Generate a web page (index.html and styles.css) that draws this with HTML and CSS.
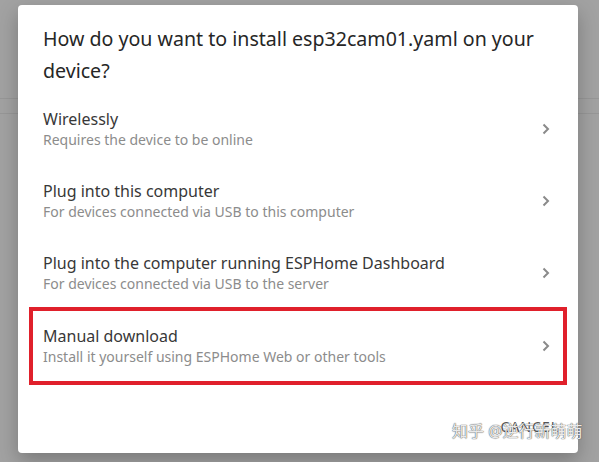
FILE: index.html
```html
<!DOCTYPE html>
<html lang="en">

<head>
    <meta charset="UTF-8">
    <meta name="viewport" content="width=device-width, initial-scale=1.0">
    <title>Install</title>
    <link rel="stylesheet" href="styles.css">
</head>

<body>
    <div class="backdrop-line line-a"></div>
    <div class="backdrop-line line-b"></div>

    <div class="dialog">
        <h2 class="dialog-title">How do you want to install esp32cam01.yaml on your device?</h2>

        <div class="options">
            <div class="option">
                <div class="option-text">
                    <div class="option-title">Wirelessly</div>
                    <div class="option-sub">Requires the device to be online</div>
                </div>
                <svg class="chevron" width="8" height="12" viewBox="0 0 8 12"><path d="M1.5 1.5 L6 6 L1.5 10.5" /></svg>
            </div>
            <div class="option">
                <div class="option-text">
                    <div class="option-title">Plug into this computer</div>
                    <div class="option-sub">For devices connected via USB to this computer</div>
                </div>
                <svg class="chevron" width="8" height="12" viewBox="0 0 8 12"><path d="M1.5 1.5 L6 6 L1.5 10.5" /></svg>
            </div>
            <div class="option">
                <div class="option-text">
                    <div class="option-title">Plug into the computer running ESPHome Dashboard</div>
                    <div class="option-sub">For devices connected via USB to the server</div>
                </div>
                <svg class="chevron" width="8" height="12" viewBox="0 0 8 12"><path d="M1.5 1.5 L6 6 L1.5 10.5" /></svg>
            </div>
            <div class="option highlighted">
                <div class="option-text">
                    <div class="option-title">Manual download</div>
                    <div class="option-sub">Install it yourself using ESPHome Web or other tools</div>
                </div>
                <svg class="chevron" width="8" height="12" viewBox="0 0 8 12"><path d="M1.5 1.5 L6 6 L1.5 10.5" /></svg>
            </div>
        </div>

        <div class="actions">
            <button class="cancel">CANCEL</button>
        </div>
    </div>

    <div class="watermark">知乎 @逆行新萌萌</div>
</body>

</html>
```

FILE: styles.css
```css
body {
    background-color: #a2a2a2;
    margin: 0;
    padding: 5px 0 0 18px;
    width: 599px;
    height: 462px;
    box-sizing: border-box;
    overflow: hidden;
    font-family: "Noto Sans", "Noto Sans CJK SC", sans-serif;
    position: relative;
}

/* faint lines of the page behind the dialog */
.backdrop-line {
    position: absolute;
    left: 0;
    right: 0;
    height: 1px;
    background-color: #979797;
}

.line-a {
    top: 98px;
}

.line-b {
    top: 113px;
}

.dialog {
    position: relative;
    width: 560px;
    height: 448px;
    background-color: white;
    border-radius: 4px;
    box-shadow: 0 8px 20px rgba(0, 0, 0, 0.25);
    display: flex;
    flex-direction: column;
}

.dialog-title {
    margin: 0;
    padding: 18px 25px 0 25px;
    font-size: 19.6px;
    font-weight: normal;
    line-height: 32px;
    color: #262626;
    height: 70px;
}

.options {
    display: flex;
    flex-direction: column;
    padding: 0 13px;
}

.option {
    height: 72px;
    display: flex;
    align-items: center;
    padding: 0 15px 0 12px;
}

.option-text {
    flex: 1;
}

.option-title {
    font-size: 16px;
    line-height: 21px;
    color: #383838;
}

.option-sub {
    font-size: 14px;
    line-height: 20px;
    color: #8c8c8c;
}

.chevron path {
    fill: none;
    stroke: #8a8a8a;
    stroke-width: 2;
}

.highlighted {
    outline: 4px solid #e0202b;
    outline-offset: -2px;
    height: 74px;
}

.actions {
    margin-top: auto;
    display: flex;
    justify-content: flex-end;
    padding: 0 13px 9px 0;
}

.cancel {
    background: none;
    border: none;
    font-family: inherit;
    font-size: 14px;
    letter-spacing: 1px;
    color: #555;
    padding: 8px 6px;
}

.watermark {
    position: absolute;
    left: 452px;
    top: 418px;
    font-size: 16px;
    color: rgba(255, 255, 255, 0.9);
    text-shadow: 0 0 1px #555, 0 0 1px #555;
    white-space: nowrap;
}
```
